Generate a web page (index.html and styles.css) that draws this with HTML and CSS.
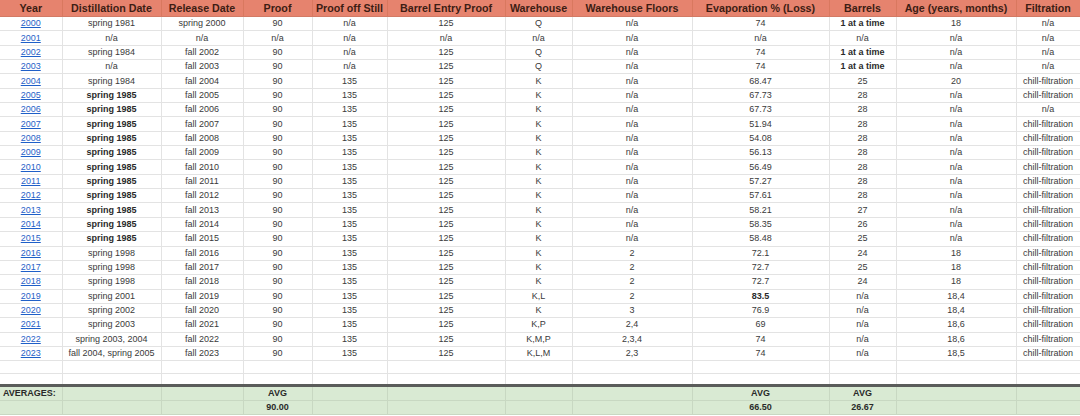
FILE: index.html
```html
<!DOCTYPE html>
<html>
<head>
<meta charset="utf-8">
<link rel="stylesheet" href="styles.css">
</head>
<body>
<table class="sheet">
<colgroup>
<col style="width:62px"><col style="width:99px"><col style="width:82px"><col style="width:69px"><col style="width:75px"><col style="width:118px"><col style="width:67px"><col style="width:120px"><col style="width:137px"><col style="width:67px"><col style="width:120px"><col style="width:64px">
</colgroup>
<thead>
<tr class="head">
<th>Year</th><th>Distillation Date</th><th>Release Date</th><th>Proof</th><th>Proof off Still</th><th>Barrel Entry Proof</th><th>Warehouse</th><th>Warehouse Floors</th><th>Evaporation % (Loss)</th><th>Barrels</th><th>Age (years, months)</th><th>Filtration</th>
</tr>
</thead>
<tbody>
<tr><td><a href="#">2000</a></td><td>spring 1981</td><td>spring 2000</td><td>90</td><td>n/a</td><td>125</td><td>Q</td><td>n/a</td><td>74</td><td class="b">1 at a time</td><td>18</td><td>n/a</td></tr>
<tr><td><a href="#">2001</a></td><td>n/a</td><td>n/a</td><td>n/a</td><td>n/a</td><td>n/a</td><td>n/a</td><td>n/a</td><td>n/a</td><td>n/a</td><td>n/a</td><td>n/a</td></tr>
<tr><td><a href="#">2002</a></td><td>spring 1984</td><td>fall 2002</td><td>90</td><td>n/a</td><td>125</td><td>Q</td><td>n/a</td><td>74</td><td class="b">1 at a time</td><td>n/a</td><td>n/a</td></tr>
<tr><td><a href="#">2003</a></td><td>n/a</td><td>fall 2003</td><td>90</td><td>n/a</td><td>125</td><td>Q</td><td>n/a</td><td>74</td><td class="b">1 at a time</td><td>n/a</td><td>n/a</td></tr>
<tr><td><a href="#">2004</a></td><td>spring 1984</td><td>fall 2004</td><td>90</td><td>135</td><td>125</td><td>K</td><td>n/a</td><td>68.47</td><td>25</td><td>20</td><td>chill-filtration</td></tr>
<tr><td><a href="#">2005</a></td><td class="b">spring 1985</td><td>fall 2005</td><td>90</td><td>135</td><td>125</td><td>K</td><td>n/a</td><td>67.73</td><td>28</td><td>n/a</td><td>chill-filtration</td></tr>
<tr><td><a href="#">2006</a></td><td class="b">spring 1985</td><td>fall 2006</td><td>90</td><td>135</td><td>125</td><td>K</td><td>n/a</td><td>67.73</td><td>28</td><td>n/a</td><td>n/a</td></tr>
<tr><td><a href="#">2007</a></td><td class="b">spring 1985</td><td>fall 2007</td><td>90</td><td>135</td><td>125</td><td>K</td><td>n/a</td><td>51.94</td><td>28</td><td>n/a</td><td>chill-filtration</td></tr>
<tr><td><a href="#">2008</a></td><td class="b">spring 1985</td><td>fall 2008</td><td>90</td><td>135</td><td>125</td><td>K</td><td>n/a</td><td>54.08</td><td>28</td><td>n/a</td><td>chill-filtration</td></tr>
<tr><td><a href="#">2009</a></td><td class="b">spring 1985</td><td>fall 2009</td><td>90</td><td>135</td><td>125</td><td>K</td><td>n/a</td><td>56.13</td><td>28</td><td>n/a</td><td>chill-filtration</td></tr>
<tr><td><a href="#">2010</a></td><td class="b">spring 1985</td><td>fall 2010</td><td>90</td><td>135</td><td>125</td><td>K</td><td>n/a</td><td>56.49</td><td>28</td><td>n/a</td><td>chill-filtration</td></tr>
<tr><td><a href="#">2011</a></td><td class="b">spring 1985</td><td>fall 2011</td><td>90</td><td>135</td><td>125</td><td>K</td><td>n/a</td><td>57.27</td><td>28</td><td>n/a</td><td>chill-filtration</td></tr>
<tr><td><a href="#">2012</a></td><td class="b">spring 1985</td><td>fall 2012</td><td>90</td><td>135</td><td>125</td><td>K</td><td>n/a</td><td>57.61</td><td>28</td><td>n/a</td><td>chill-filtration</td></tr>
<tr><td><a href="#">2013</a></td><td class="b">spring 1985</td><td>fall 2013</td><td>90</td><td>135</td><td>125</td><td>K</td><td>n/a</td><td>58.21</td><td>27</td><td>n/a</td><td>chill-filtration</td></tr>
<tr><td><a href="#">2014</a></td><td class="b">spring 1985</td><td>fall 2014</td><td>90</td><td>135</td><td>125</td><td>K</td><td>n/a</td><td>58.35</td><td>26</td><td>n/a</td><td>chill-filtration</td></tr>
<tr><td><a href="#">2015</a></td><td class="b">spring 1985</td><td>fall 2015</td><td>90</td><td>135</td><td>125</td><td>K</td><td>n/a</td><td>58.48</td><td>25</td><td>n/a</td><td>chill-filtration</td></tr>
<tr><td><a href="#">2016</a></td><td>spring 1998</td><td>fall 2016</td><td>90</td><td>135</td><td>125</td><td>K</td><td>2</td><td>72.1</td><td>24</td><td>18</td><td>chill-filtration</td></tr>
<tr><td><a href="#">2017</a></td><td>spring 1998</td><td>fall 2017</td><td>90</td><td>135</td><td>125</td><td>K</td><td>2</td><td>72.7</td><td>25</td><td>18</td><td>chill-filtration</td></tr>
<tr><td><a href="#">2018</a></td><td>spring 1998</td><td>fall 2018</td><td>90</td><td>135</td><td>125</td><td>K</td><td>2</td><td>72.7</td><td>24</td><td>18</td><td>chill-filtration</td></tr>
<tr><td><a href="#">2019</a></td><td>spring 2001</td><td>fall 2019</td><td>90</td><td>135</td><td>125</td><td>K,L</td><td>2</td><td class="b">83.5</td><td>n/a</td><td>18,4</td><td>chill-filtration</td></tr>
<tr><td><a href="#">2020</a></td><td>spring 2002</td><td>fall 2020</td><td>90</td><td>135</td><td>125</td><td>K</td><td>3</td><td>76.9</td><td>n/a</td><td>18,4</td><td>chill-filtration</td></tr>
<tr><td><a href="#">2021</a></td><td>spring 2003</td><td>fall 2021</td><td>90</td><td>135</td><td>125</td><td>K,P</td><td>2,4</td><td>69</td><td>n/a</td><td>18,6</td><td>chill-filtration</td></tr>
<tr><td><a href="#">2022</a></td><td>spring 2003, 2004</td><td>fall 2022</td><td>90</td><td>135</td><td>125</td><td>K,M,P</td><td>2,3,4</td><td>74</td><td>n/a</td><td>18,6</td><td>chill-filtration</td></tr>
<tr><td><a href="#">2023</a></td><td>fall 2004, spring 2005</td><td>fall 2023</td><td>90</td><td>135</td><td>125</td><td>K,L,M</td><td>2,3</td><td>74</td><td>n/a</td><td>18,5</td><td>chill-filtration</td></tr>
<tr class="empty"><td></td><td></td><td></td><td></td><td></td><td></td><td></td><td></td><td></td><td></td><td></td><td></td></tr>
<tr class="empty"><td></td><td></td><td></td><td></td><td></td><td></td><td></td><td></td><td></td><td></td><td></td><td></td></tr>
<tr class="avg first"><td class="b left">AVERAGES:</td><td></td><td></td><td class="b">AVG</td><td></td><td></td><td></td><td></td><td class="b">AVG</td><td class="b">AVG</td><td></td><td></td></tr>
<tr class="avg"><td></td><td></td><td></td><td class="b">90.00</td><td></td><td></td><td></td><td></td><td class="b">66.50</td><td class="b">26.67</td><td></td><td></td></tr>
</tbody>
</table>
</body>
</html>
```
FILE: styles.css
```css
html, body {
  margin: 0;
  padding: 0;
  background: #ffffff;
  overflow: hidden;
}

.sheet {
  border-collapse: collapse;
  table-layout: fixed;
  width: 1080px;
  font-family: "Liberation Sans", Arial, sans-serif;
  font-size: 9px;
  color: #3a3a3a;
}

.sheet th,
.sheet td {
  padding: 0 2px;
  text-align: center;
  vertical-align: middle;
  white-space: nowrap;
  overflow: hidden;
  line-height: 11px;
}

.head th {
  height: 16px;
  background: #e6836e;
  color: #3d1d14;
  font-size: 10.7px;
  font-weight: bold;
  border-right: 1px solid #d9785f;
  border-bottom: 1px solid #d27a65;
}

.sheet tbody tr {
  height: 14.35px;
}

.sheet td {
  border: 1px solid #e3e3e3;
  border-top: none;
}

.sheet td:first-child {
  border-left: none;
}

.sheet td a {
  color: #1f5fc8;
  text-decoration: underline;
}

.b {
  font-weight: bold;
  color: #2a2a2a;
}

.sheet tr.empty {
  height: 12.5px;
}

.sheet tr.avg td {
  background: #d9ead3;
  border-color: #c8d8c2;
  color: #2a2a2a;
}

.sheet tr.avg.first td {
  border-top: 3px solid #5a5c5a;
}

.sheet td.left {
  text-align: left;
  padding-left: 3px;
}
```
